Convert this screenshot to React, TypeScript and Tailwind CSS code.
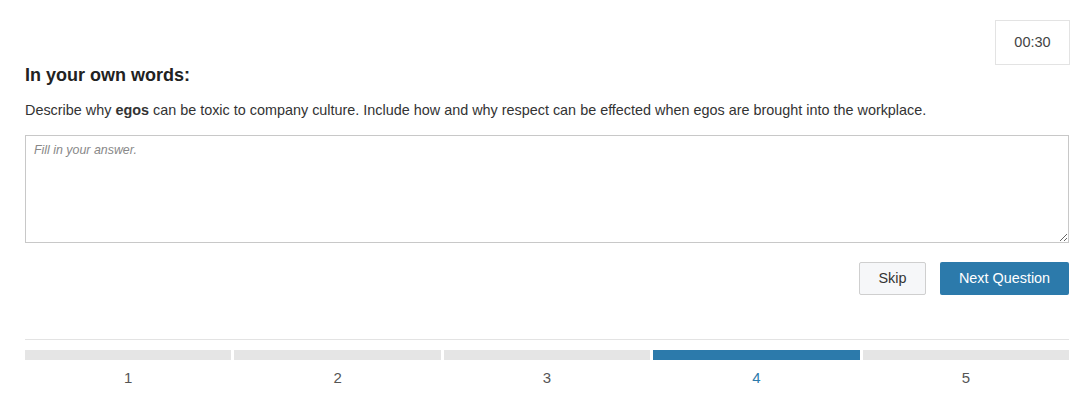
const steps = [1, 2, 3, 4, 5];
const current = 4;

export default function App() {
  return (
    <div className="min-h-screen bg-white pl-[25px] pr-[18px] pt-[20px] text-[#333] font-['Liberation_Sans',Arial,sans-serif]">
      {/* timer */}
      <div className="flex justify-end">
        <div className="-mr-px flex h-[45px] w-[75px] items-center justify-center border border-[#e3e3e3] text-[14.5px] text-[#444]">
          00:30
        </div>
      </div>

      <h2 className="text-[18px] font-bold leading-[20px] text-[#222]">In your own words:</h2>

      <p className="mt-[16px] text-[14.4px] leading-[18px] text-[#333]">
        Describe why <b>egos</b> can be toxic to company culture. Include how and why respect can be effected when egos are brought into the workplace.
      </p>

      <textarea
        placeholder="Fill in your answer."
        className="mt-[16px] block h-[108px] w-full resize-y border border-[#c8c8c8] px-[8px] py-[6px] text-[12.4px] leading-[16px] outline-none placeholder:italic placeholder:text-[#888]"
      />

      {/* actions */}
      <div className="mt-[19px] flex justify-end gap-[14px]">
        <button className="h-[33px] w-[67px] rounded-[2px] border border-[#cfcfcf] bg-[#f6f7f9] text-[14.4px] text-[#333]">
          Skip
        </button>
        <button className="h-[33px] w-[129px] rounded-[2px] bg-[#2c7aab] text-[14.4px] text-white">
          Next Question
        </button>
      </div>

      <hr className="mt-[44px] border-t border-[#e3e3e3]" />

      {/* progress */}
      <div className="mt-[10px] flex gap-[3px]">
        {steps.map((s) => (
          <div key={s} className="flex-1">
            <div className={s === current ? "h-[10px] bg-[#2c7aab]" : "h-[10px] bg-[#e5e5e5]"} />
            <div
              className={
                s === current
                  ? "mt-[9px] text-center text-[15px] leading-[18px] text-[#2c7aab]"
                  : "mt-[9px] text-center text-[15px] leading-[18px] text-[#555]"
              }
            >
              {s}
            </div>
          </div>
        ))}
      </div>
    </div>
  );
}
